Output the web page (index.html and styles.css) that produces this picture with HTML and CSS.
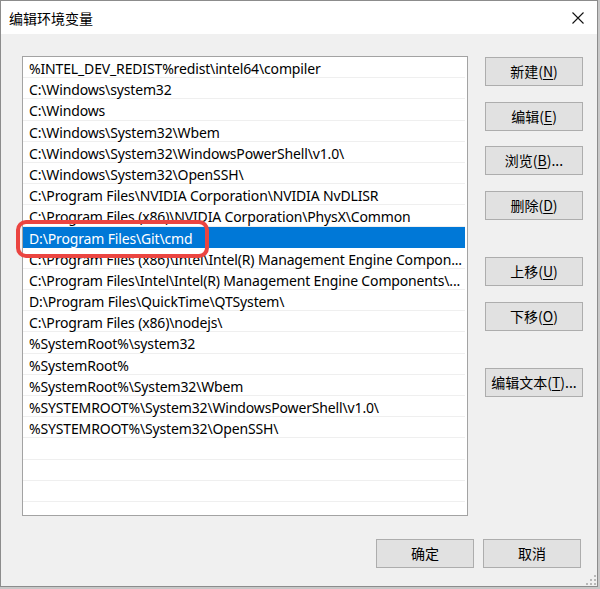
FILE: index.html
```html
<!DOCTYPE html>
<html lang="zh-CN">
<head>
<meta charset="utf-8">
<title>编辑环境变量</title>
<link rel="stylesheet" href="styles.css">
</head>
<body>
<div class="window">
  <div class="titlebar">
    <span class="title">编辑环境变量</span>
    <span class="close">
      <svg width="12" height="12" viewBox="0 0 12 12"><path d="M0.5 0.5 L11.5 11.5 M11.5 0.5 L0.5 11.5" stroke="#111" stroke-width="1.1" fill="none"/></svg>
    </span>
  </div>
  <div class="content">
    <div class="main">
      <div class="list">
        <div class="row">%INTEL_DEV_REDIST%redist\intel64\compiler</div>
        <div class="row">C:\Windows\system32</div>
        <div class="row">C:\Windows</div>
        <div class="row">C:\Windows\System32\Wbem</div>
        <div class="row">C:\Windows\System32\WindowsPowerShell\v1.0\</div>
        <div class="row">C:\Windows\System32\OpenSSH\</div>
        <div class="row">C:\Program Files\NVIDIA Corporation\NVIDIA NvDLISR</div>
        <div class="row">C:\Program Files (x86)\NVIDIA Corporation\PhysX\Common</div>
        <div class="row selected">D:\Program Files\Git\cmd</div>
        <div class="row">C:\Program Files (x86)\Intel\Intel(R) Management Engine Compon...</div>
        <div class="row">C:\Program Files\Intel\Intel(R) Management Engine Components\...</div>
        <div class="row">D:\Program Files\QuickTime\QTSystem\</div>
        <div class="row">C:\Program Files (x86)\nodejs\</div>
        <div class="row">%SystemRoot%\system32</div>
        <div class="row">%SystemRoot%</div>
        <div class="row">%SystemRoot%\System32\Wbem</div>
        <div class="row">%SYSTEMROOT%\System32\WindowsPowerShell\v1.0\</div>
        <div class="row">%SYSTEMROOT%\System32\OpenSSH\</div>
        <div class="row"></div>
        <div class="row"></div>
        <div class="row"></div>
        <div class="row"></div>
      </div>
      <div class="side">
        <button class="btn">新建(<u>N</u>)</button>
        <button class="btn">编辑(<u>E</u>)</button>
        <button class="btn">浏览(<u>B</u>)...</button>
        <button class="btn">删除(<u>D</u>)</button>
        <button class="btn group">上移(<u>U</u>)</button>
        <button class="btn">下移(<u>O</u>)</button>
        <button class="btn group">编辑文本(<u>T</u>)...</button>
      </div>
    </div>
    <div class="footer">
      <button class="btn">确定</button>
      <button class="btn">取消</button>
    </div>
  </div>
  <div class="highlight"></div>
  <svg class="grip" width="12" height="12" viewBox="0 0 12 12">
    <rect x="9" y="1" width="2" height="2" fill="#b8b8b8"/>
    <rect x="5" y="5" width="2" height="2" fill="#b8b8b8"/>
    <rect x="9" y="5" width="2" height="2" fill="#b8b8b8"/>
    <rect x="1" y="9" width="2" height="2" fill="#b8b8b8"/>
    <rect x="5" y="9" width="2" height="2" fill="#b8b8b8"/>
    <rect x="9" y="9" width="2" height="2" fill="#b8b8b8"/>
  </svg>
</div>
</body>
</html>
```
FILE: styles.css
```css
html, body {
  margin: 0;
  padding: 0;
  background: #c8c8c8;
}
body {
  font-family: "Noto Sans", "Noto Sans CJK SC", sans-serif;
  font-size: 14px;
  color: #000;
}
.window {
  position: relative;
  width: 596px;
  height: 585px;
  border: 1px solid #8c8c8c;
  background: #f0f0f0;
  display: flex;
  flex-direction: column;
}
.titlebar {
  height: 33px;
  background: #fff;
  display: flex;
  align-items: center;
  justify-content: space-between;
  padding: 0 13px 0 8px;
  flex: none;
}
.title {
  font-family: "Noto Sans CJK SC", sans-serif;
  font-size: 14px;
  color: #000;
  margin-top: 1px;
}
.close {
  display: flex;
  width: 12px;
  height: 12px;
  margin-top: 1px;
}
.content {
  flex: 1;
  display: flex;
  flex-direction: column;
  padding: 22px 15px 0 21px;
}
.main {
  display: flex;
  gap: 17px;
}
.list {
  width: 444px;
  height: 458px;
  border: 1px solid #a3a3a3;
  background: #fff;
  overflow: hidden;
  flex: none;
}
.row {
  box-sizing: border-box;
  height: 21.2px;
  padding-top: 3px;
  line-height: 17px;
  border-bottom: 1px solid #efefef;
  margin-right: 2px;
  padding-left: 6px;
  white-space: nowrap;
  overflow-x: clip;
  overflow-y: visible;
  letter-spacing: -0.15px;
  color: #000;
}
.row.selected {
  background: #0078d7;
  color: #fff;
  border-bottom-color: #0078d7;
}
.side {
  display: flex;
  flex-direction: column;
  gap: 15.5px;
  padding-top: 1px;
}
.btn {
  width: 98px;
  height: 29px;
  background: #e1e1e1;
  border: 1px solid #adadad;
  font-family: "Noto Sans CJK SC", sans-serif;
  font-size: 14px;
  color: #000;
  padding: 0;
  margin: 0;
  line-height: 27px;
}
.btn u {
  text-decoration-thickness: 1px;
  text-underline-offset: 2px;
}
.side .group {
  margin-top: 22px;
}
.footer {
  display: flex;
  justify-content: flex-end;
  gap: 9px;
  margin-top: 23px;
  padding-right: 1px;
}
.highlight {
  position: absolute;
  left: 15px;
  top: 219px;
  width: 185px;
  height: 30px;
  border: 4px solid #eb4541;
  border-radius: 10px;
}
.grip {
  position: absolute;
  right: 0;
  bottom: 0;
}
```
